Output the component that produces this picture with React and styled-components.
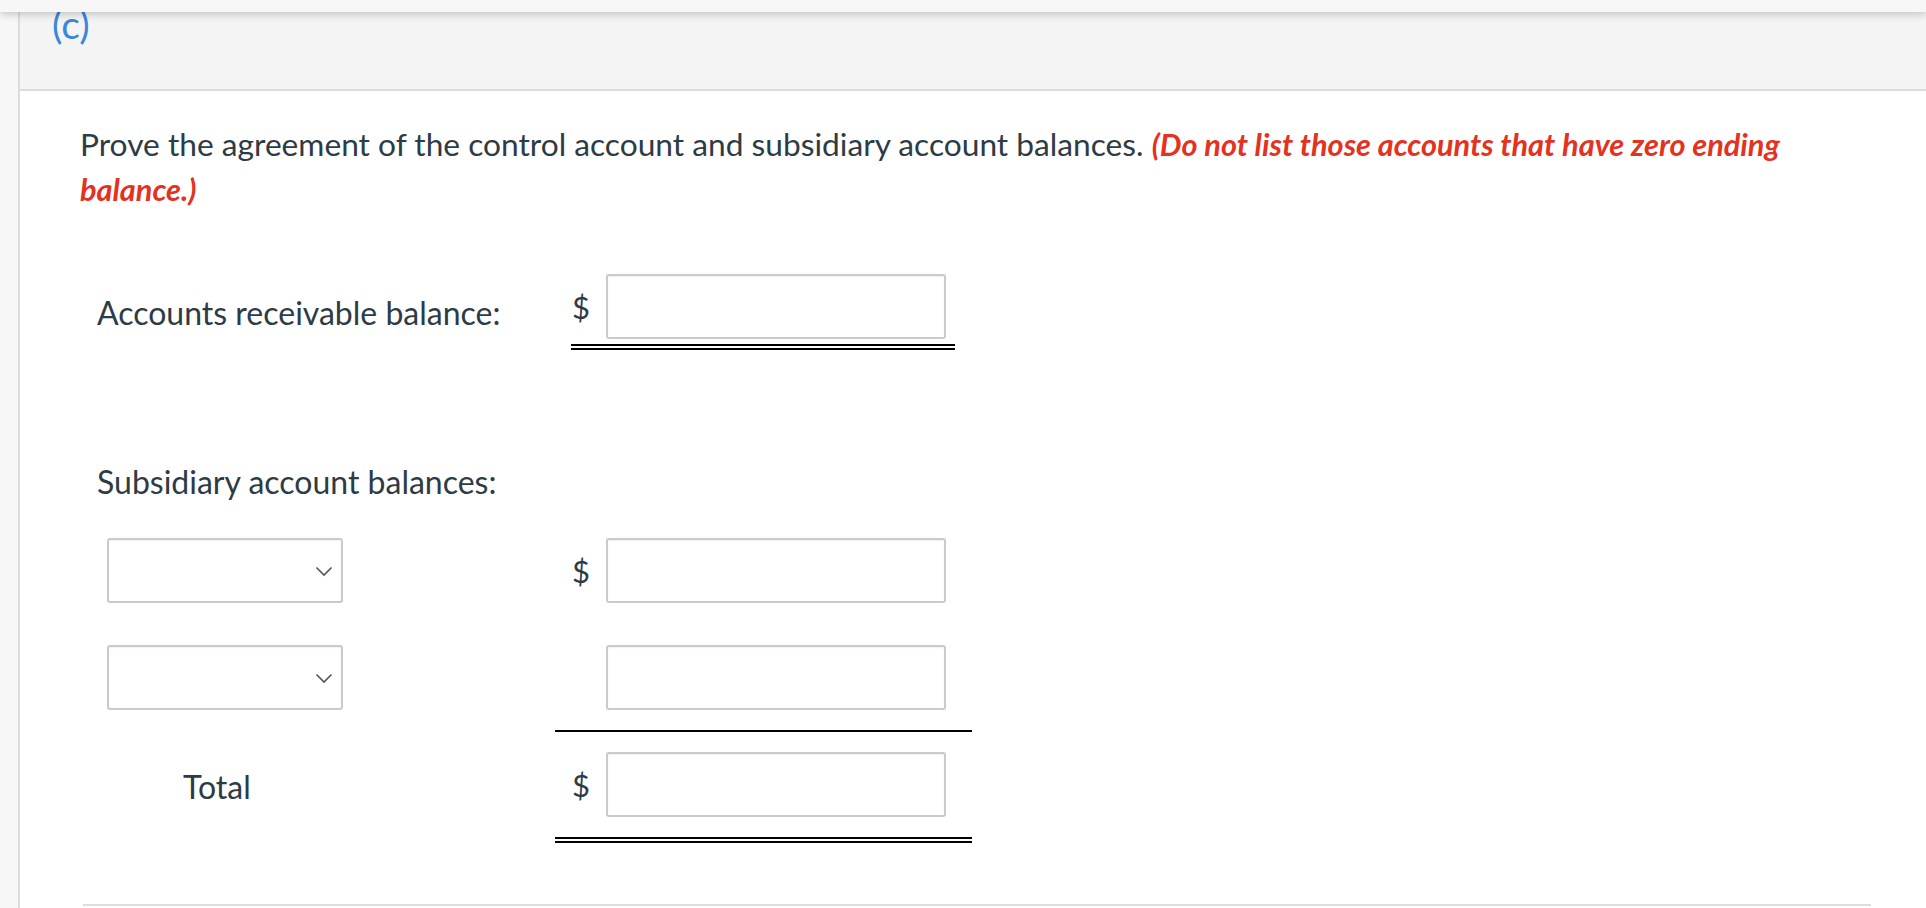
import React from 'react';
import styled, { createGlobalStyle } from 'styled-components';

const Global = createGlobalStyle`
  html, body {
    margin: 0;
    padding: 0;
    background: #ffffff;
  }
  body {
    font-family: Lato, "Open Sans", sans-serif;
    color: #2d3b45;
  }
`;

const TopBar = styled.div`
  position: relative;
  z-index: 2;
  height: 12px;
  background: #f7f7f7;
  box-shadow: 0 2px 9px rgba(0, 0, 0, 0.22);
`;

const Layout = styled.div`
  display: flex;
  min-height: 896px;
`;

const Rail = styled.div`
  width: 18px;
  flex: none;
  background: #f7f7f7;
  border-right: 2px solid #dcdcdc;
`;

const Main = styled.div`
  flex: 1;
  display: flex;
  flex-direction: column;
`;

const Header = styled.div`
  height: 77px;
  background: #f4f4f4;
  border-bottom: 2px solid #dcdcdc;
  padding-left: 32px;
  overflow: hidden;
`;

const Part = styled.span`
  display: block;
  margin-top: -11px;
  font-size: 39px;
  line-height: 46px;
  color: #3a88d8;
`;

const Content = styled.div`
  padding: 31px 55px 0 60px;
`;

const Prompt = styled.p`
  margin: 0;
  font-size: 31.7px;
  line-height: 44px;
`;

const Note = styled.em`
  color: #e4321f;
  font-weight: 700;
  font-size: 30.7px;
`;

const Form = styled.div`
  margin: 62px 0 0 17px;
  display: flex;
  flex-direction: column;
`;

const Row = styled.div`
  display: flex;
  align-items: center;
  margin-bottom: ${(p) => p.$gap || 0}px;
`;

const LabelCell = styled.div`
  width: ${(p) => p.$width}px;
  flex: none;
  padding-left: ${(p) => p.$indent || 0}px;
  box-sizing: border-box;
  font-size: 32px;
  line-height: 45px;
`;

const Heading = styled.div`
  font-size: 32px;
  line-height: 45px;
  margin: 109px 0 34px;
`;

const AmountCell = styled.div`
  display: flex;
  align-items: center;
  flex: none;
  padding: ${(p) => (p.$wide ? '0 26px 0 17px' : '0 9px 0 1px')};
  padding-top: ${(p) => p.$padTop || 0}px;
  padding-bottom: ${(p) => p.$padBottom || 0}px;
  border-top: ${(p) => (p.$topRule ? '2px solid #000' : 'none')};
  border-bottom: ${(p) => (p.$doubleRule ? '6px double #000' : 'none')};
`;

const Dollar = styled.span`
  width: 34px;
  flex: none;
  font-size: 31px;
  line-height: 40px;
  visibility: ${(p) => (p.$hidden ? 'hidden' : 'visible')};
`;

const Field = styled.input`
  width: 340px;
  height: 65px;
  box-sizing: border-box;
  border: 2px solid #cacaca;
  border-radius: 3px;
  box-shadow: inset 0 1px 2px rgba(0, 0, 0, 0.06);
  background: #fff;
  font-family: inherit;
  font-size: 24px;
  padding: 0 10px;
  outline: none;
`;

const SelectBox = styled.div`
  position: relative;
  width: 236px;
  height: 65px;
  margin-left: 10px;
  box-sizing: border-box;
  border: 2px solid #cacaca;
  border-radius: 3px;
  box-shadow: inset 0 1px 2px rgba(0, 0, 0, 0.06);
  background: #fff;
`;

const Chevron = styled.svg`
  position: absolute;
  right: 8px;
  top: 26px;
`;

const Rule = styled.div`
  margin: 61px 0 0 3px;
  height: 2px;
  background: #dddddd;
`;

function Select() {
  return (
    <SelectBox>
      <Chevron width="18" height="11" viewBox="0 0 18 11">
        <polyline points="1.5,1.5 9,9 16.5,1.5" fill="none" stroke="#555" strokeWidth="1.6" />
      </Chevron>
    </SelectBox>
  );
}

export default function App() {
  return (
    <>
      <Global />
      <TopBar />
      <Layout>
        <Rail />
        <Main>
          <Header>
            <Part>(c)</Part>
          </Header>
          <Content>
            <Prompt>
              Prove the agreement of the control account and subsidiary account balances.{' '}
              <Note>(Do not list those accounts that have zero ending balance.)</Note>
            </Prompt>
            <Form>
              <Row>
                <LabelCell $width={474}>Accounts receivable balance:</LabelCell>
                <AmountCell $doubleRule $padBottom={5}>
                  <Dollar>$</Dollar>
                  <Field />
                </AmountCell>
              </Row>
              <Heading>Subsidiary account balances:</Heading>
              <Row $gap={42}>
                <LabelCell $width={458}><Select /></LabelCell>
                <AmountCell $wide>
                  <Dollar>$</Dollar>
                  <Field />
                </AmountCell>
              </Row>
              <Row $gap={20}>
                <LabelCell $width={458}><Select /></LabelCell>
                <AmountCell $wide>
                  <Dollar $hidden>$</Dollar>
                  <Field />
                </AmountCell>
              </Row>
              <Row>
                <LabelCell $width={458} $indent={86}>Total</LabelCell>
                <AmountCell $wide $topRule $doubleRule $padTop={20} $padBottom={20}>
                  <Dollar>$</Dollar>
                  <Field />
                </AmountCell>
              </Row>
            </Form>
            <Rule />
          </Content>
        </Main>
      </Layout>
    </>
  );
}
